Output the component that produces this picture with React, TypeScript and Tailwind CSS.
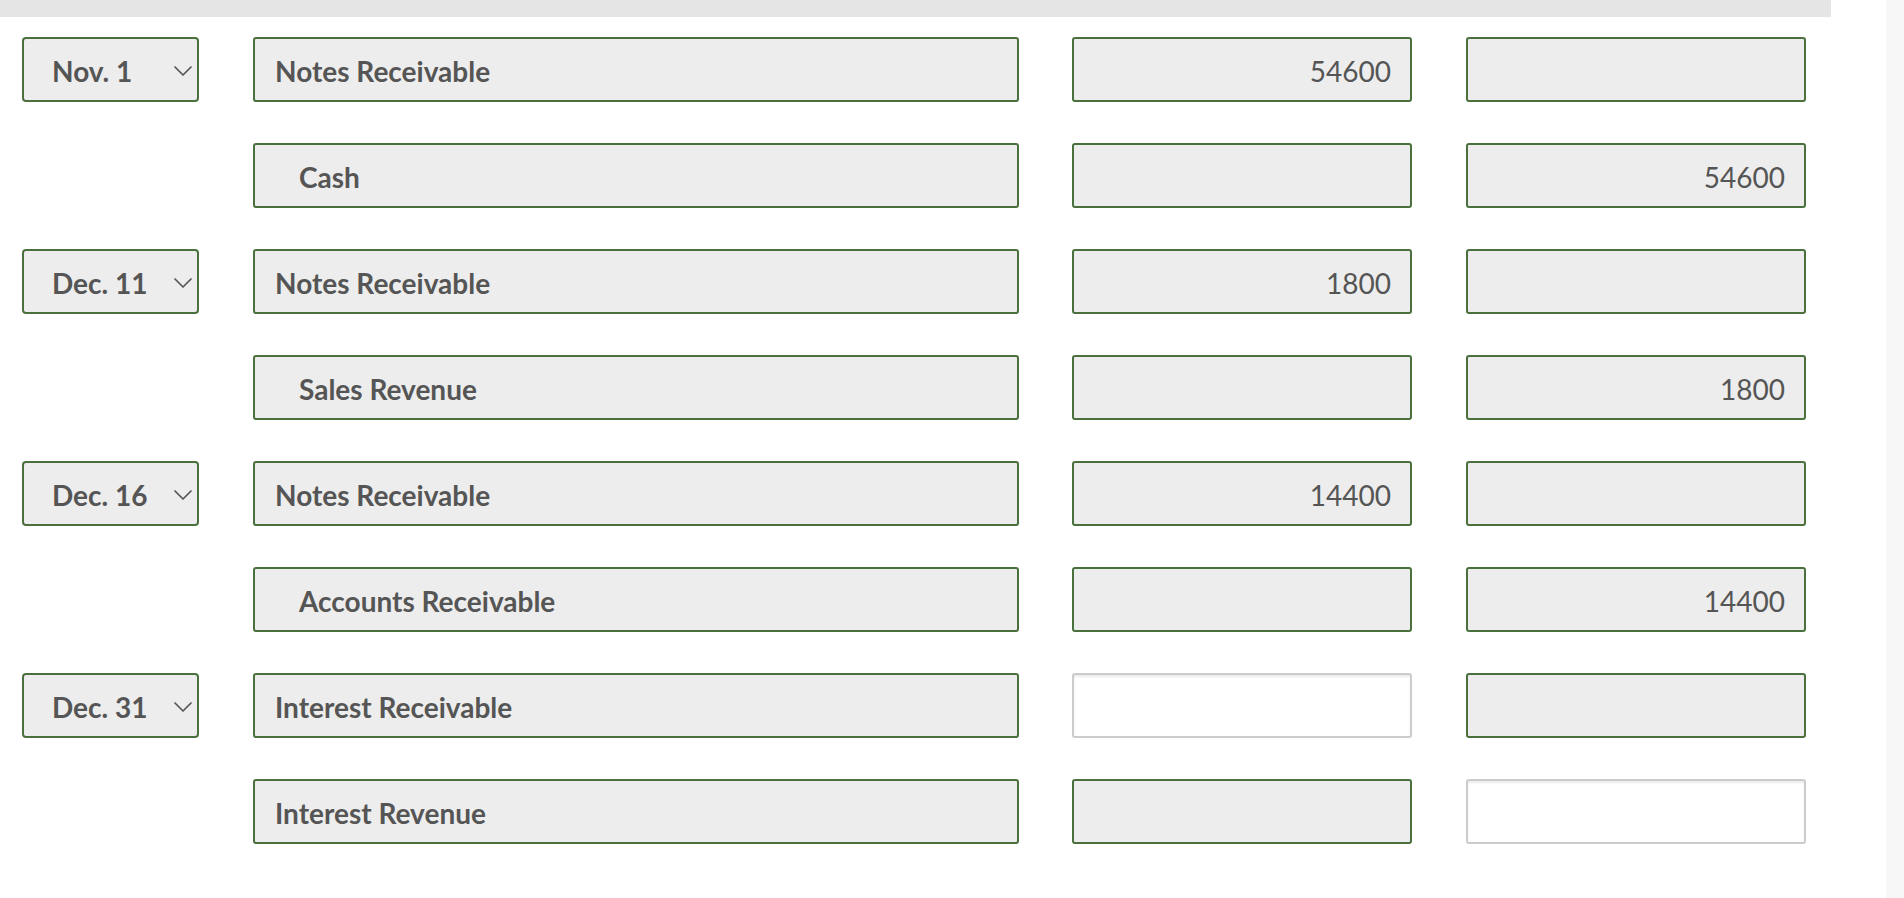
type Cell = { value: string; state: 'filled' | 'empty' }

type Row = {
  date?: string
  account: string
  indent?: boolean
  debit: Cell
  credit: Cell
}

const ROWS: Row[] = [
  { date: 'Nov. 1', account: 'Notes Receivable', debit: { value: '54600', state: 'filled' }, credit: { value: '', state: 'filled' } },
  { account: 'Cash', indent: true, debit: { value: '', state: 'filled' }, credit: { value: '54600', state: 'filled' } },
  { date: 'Dec. 11', account: 'Notes Receivable', debit: { value: '1800', state: 'filled' }, credit: { value: '', state: 'filled' } },
  { account: 'Sales Revenue', indent: true, debit: { value: '', state: 'filled' }, credit: { value: '1800', state: 'filled' } },
  { date: 'Dec. 16', account: 'Notes Receivable', debit: { value: '14400', state: 'filled' }, credit: { value: '', state: 'filled' } },
  { account: 'Accounts Receivable', indent: true, debit: { value: '', state: 'filled' }, credit: { value: '14400', state: 'filled' } },
  { date: 'Dec. 31', account: 'Interest Receivable', debit: { value: '', state: 'empty' }, credit: { value: '', state: 'filled' } },
  { account: 'Interest Revenue', debit: { value: '', state: 'filled' }, credit: { value: '', state: 'empty' } },
]

const FILLED = 'border-2 border-[#4a703e] bg-[#ededed]'
const EMPTY = 'border-2 border-[#cccccc] bg-white shadow-[inset_0_2px_2px_rgba(0,0,0,0.08)]'

// thin caret used by the date dropdowns
function Caret() {
  return (
    <svg width="18" height="10" viewBox="0 0 18 10" fill="none" className="shrink-0">
      <polyline points="1,1 9,9 17,1" stroke="#555555" strokeWidth="1.7" strokeLinecap="round" strokeLinejoin="round" />
    </svg>
  )
}

function AmountBox({ cell }: { cell: Cell }) {
  return (
    <div
      className={`w-[340px] h-[65px] shrink-0 rounded-[3px] flex items-center justify-end pr-[19px] pt-[2px] text-[28px] text-[#555555] ${
        cell.state === 'filled' ? FILLED : EMPTY
      }`}
    >
      {cell.value}
    </div>
  )
}

export default function App() {
  return (
    <div className="flex min-h-screen bg-white font-['Lato','Liberation_Sans',sans-serif]">
      <div className="flex-1">
        <div className="h-[17px] w-[1831px] bg-[#e5e5e5]" />
        <div className="pl-[22px] pt-[20px] flex flex-col gap-[41px]">
          {ROWS.map((row, i) => (
            <div key={i} className="flex items-center">
              <div className="w-[177px] shrink-0">
                {row.date && (
                  <div className={`h-[65px] rounded-[4px] flex items-center justify-between pl-[28px] pr-[5px] pt-[2px] ${FILLED}`}>
                    <span className="text-[28px] font-bold text-[#555555]">{row.date}</span>
                    <Caret />
                  </div>
                )}
              </div>
              <div
                className={`ml-[54px] w-[766px] h-[65px] shrink-0 rounded-[3px] flex items-center pt-[2px] text-[28px] font-bold text-[#555555] ${FILLED} ${
                  row.indent ? 'pl-[44px]' : 'pl-[20px]'
                }`}
              >
                {row.account}
              </div>
              <div className="ml-[53px]">
                <AmountBox cell={row.debit} />
              </div>
              <div className="ml-[54px]">
                <AmountBox cell={row.credit} />
              </div>
            </div>
          ))}
        </div>
      </div>
      <div className="w-[18px] shrink-0 bg-[#f7f7f7]" />
    </div>
  )
}
